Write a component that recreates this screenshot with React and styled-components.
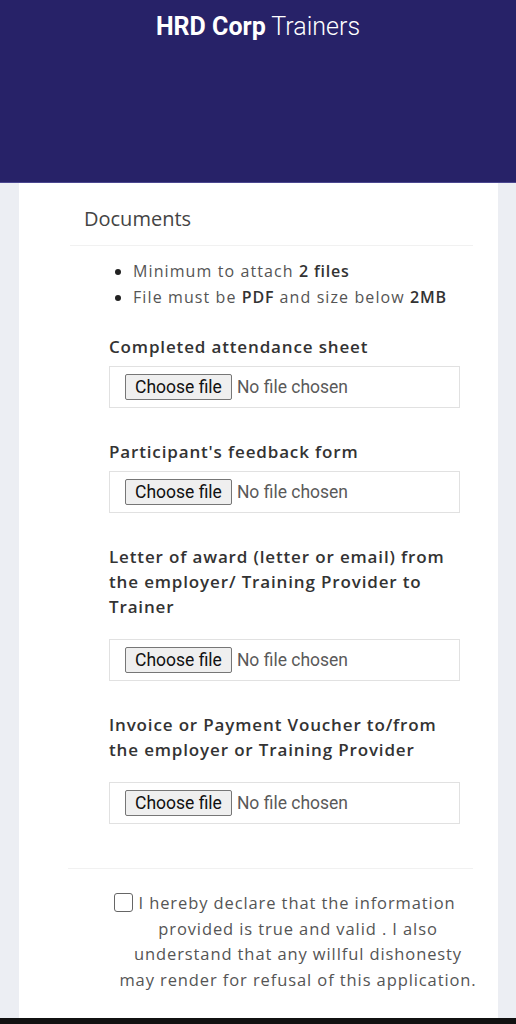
import React from "react";
import styled, { createGlobalStyle } from "styled-components";

const Global = createGlobalStyle`
  html, body { margin: 0; padding: 0; }
  body { background: #eceef3; font-family: "Open Sans", "Liberation Sans", sans-serif; }
`;

const Page = styled.div`
  height: 1024px;
  display: flex;
  flex-direction: column;
  overflow: hidden;
`;

const Header = styled.header`
  height: 183px;
  flex: none;
  background: #272268;
  border-bottom: 1px solid #4b4790;
  display: flex;
  justify-content: center;
  align-items: flex-start;
  padding-top: 12px;
  box-sizing: border-box;
`;

const Brand = styled.h1`
  margin: 0;
  font-family: Roboto, "Liberation Sans", sans-serif;
  font-size: 25px;
  line-height: 30px;
  color: #ffffff;
  font-weight: 300;
  b { font-weight: 700; }
`;

const Card = styled.main`
  flex: 1;
  margin: 0 18px 0 19px;
  background: #ffffff;
  padding: 0 25px 0 51px;
`;

const Title = styled.h2`
  margin: 0;
  padding: 22px 0 13px 14px;
  font-family: "Open Sans", "Liberation Sans", sans-serif;
  font-weight: 400;
  font-size: 20px;
  line-height: 27px;
  color: #444;
  border-bottom: 1px solid #f1f1f1;
`;

const Body = styled.div`
  padding: 12px 13px 0 39px;
`;

const Rules = styled.ul`
  margin: 0 0 24px 0;
  padding-left: 24px;
  font-family: "Open Sans", sans-serif;
  font-size: 16px;
  letter-spacing: 1.1px;
  line-height: 26px;
  color: #555;
  li::marker { color: #222; }
  b { color: #333; font-weight: 600; letter-spacing: 0.8px; }
`;

const Field = styled.div`
  margin-bottom: 31px;
`;

const Label = styled.div`
  font-family: "Open Sans", sans-serif;
  font-weight: 600;
  font-size: 17px;
  line-height: 25px;
  color: #333;
  letter-spacing: 0.85px;
  margin-bottom: ${(p) => (p.$multi ? "20px" : "7px")};
`;

const FileBox = styled.div`
  height: 42px;
  box-sizing: border-box;
  border: 1px solid #e1e1e1;
  display: flex;
  align-items: center;
  padding-left: 15px;
  font-family: Roboto, "Liberation Sans", sans-serif;
  font-size: 17.5px;
`;

const ChooseButton = styled.span`
  display: inline-flex;
  align-items: center;
  height: 26px;
  box-sizing: border-box;
  padding: 0 9px;
  background: #efefef;
  border: 1px solid #767676;
  border-radius: 2px;
  color: #111;
`;

const NoFile = styled.span`
  margin-left: 5px;
  color: #5a5a5a;
`;

const Divider = styled.hr`
  border: none;
  border-top: 1px solid #f1f1f1;
  margin: 44px 0 0 -2px;
`;

const Declare = styled.label`
  display: block;
  margin: 21px 0 0 44px;
  width: 368px;
  text-align: center;
  text-indent: -26px;
  font-family: "Open Sans", sans-serif;
  font-size: 16.5px;
  letter-spacing: 0.9px;
  line-height: 25.5px;
  color: #555;
`;

const Box = styled.span`
  display: inline-block;
  width: 17px;
  height: 17px;
  border: 1.5px solid #666;
  border-radius: 3px;
  vertical-align: -3px;
  margin-right: 5px;
`;

const NavBar = styled.div`
  height: 6px;
  flex: none;
  background: #111;
`;

const fields = [
  { label: "Completed attendance sheet" },
  { label: "Participant's feedback form" },
  { label: "Letter of award (letter or email) from the employer/ Training Provider to Trainer", multi: true },
  { label: "Invoice or Payment Voucher to/from the employer or Training Provider", multi: true },
];

export default function App() {
  return (
    <>
      <Global />
      <Page>
        <Header>
          <Brand>
            <b>HRD Corp</b> Trainers
          </Brand>
        </Header>
        <Card>
          <Title>Documents</Title>
          <Body>
            <Rules>
              <li>
                Minimum to attach <b>2 files</b>
              </li>
              <li>
                File must be <b>PDF</b> and size below <b>2MB</b>
              </li>
            </Rules>
            {fields.map((f) => (
              <Field key={f.label}>
                <Label $multi={f.multi}>{f.label}</Label>
                <FileBox>
                  <ChooseButton>Choose file</ChooseButton>
                  <NoFile>No file chosen</NoFile>
                </FileBox>
              </Field>
            ))}
          </Body>
          <Divider />
          <Declare>
            <Box />
            I hereby declare that the information provided is true and valid . I also understand that any willful dishonesty may render for refusal of this application.
          </Declare>
        </Card>
        <NavBar />
      </Page>
    </>
  );
}
